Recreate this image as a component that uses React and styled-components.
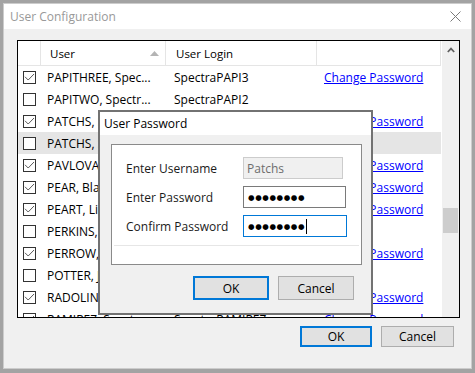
import React from 'react';
import styled, { createGlobalStyle } from 'styled-components';

const GlobalStyle = createGlobalStyle`
  html, body {
    margin: 0;
    padding: 0;
    background: #a3a3a3;
  }
  body {
    font-family: "Open Sans", "Noto Sans", sans-serif;
    font-size: 11.5px;
    color: #000;
  }
`;

const Screen = styled.div`
  position: relative;
  width: 475px;
  height: 373px;
  padding: 3px;
  box-sizing: border-box;
  background: #a3a3a3;
  overflow: hidden;
`;

const Window = styled.div`
  width: 469px;
  height: 366px;
  box-sizing: border-box;
  border: 1px solid #cccccc;
  background: #f0f0f0;
  display: flex;
  flex-direction: column;
`;

const TitleBar = styled.div`
  height: ${({ height }) => height}px;
  flex: none;
  background: #ffffff;
  display: flex;
  align-items: center;
  justify-content: space-between;
  padding: 0 10px 0 ${({ inset }) => inset}px;
`;

const TitleText = styled.span`
  font-size: 12px;
  color: ${({ active }) => (active ? '#000000' : '#999999')};
`;

const Body = styled.div`
  display: flex;
  flex-direction: column;
  padding: 11px 11px 0 13px;
`;

const ListBox = styled.div`
  height: 278px;
  box-sizing: border-box;
  border: 1px solid #000000;
  background: #ffffff;
  display: flex;
  overflow: hidden;
`;

const Table = styled.div`
  width: 423px;
  flex: none;
`;

const Grid = styled.div`
  display: grid;
  grid-template-columns: 23px 125px 151px 124px;
  height: ${({ height }) => height}px;
  align-items: center;
  background: ${({ highlight }) => (highlight ? '#e5e5e5' : 'transparent')};
`;

const Header = styled(Grid)`
  border-bottom: 1px solid #e5e5e5;
  align-items: stretch;
`;

const HeadCell = styled.div`
  display: flex;
  align-items: center;
  justify-content: space-between;
  padding: 0 6px 0 ${({ pad }) => pad}px;
  border-right: 1px solid #e5e5e5;
`;

const Cell = styled.div`
  padding-left: ${({ pad }) => pad}px;
  white-space: nowrap;
  overflow: hidden;
  font-size: 12px;
`;

const CheckCell = styled.div`
  display: flex;
  justify-content: center;
`;

const Box = styled.span`
  width: 13px;
  height: 13px;
  box-sizing: border-box;
  border: 1px solid #333333;
  background: #ffffff;
  display: flex;
`;

const Link = styled.a`
  color: #0000ff;
  text-decoration: underline;
  font-size: 12px;
`;

const Scrollbar = styled.div`
  width: 17px;
  flex: none;
  margin-left: 1px;
  background: #f0f0f0;
  display: flex;
  flex-direction: column;
`;

const ArrowButton = styled.div`
  height: 17px;
  display: flex;
  align-items: center;
  justify-content: center;
`;

const Thumb = styled.div`
  height: 25px;
  margin: ${({ offset }) => offset}px 1px 0;
  background: #cdcdcd;
`;

const ButtonRow = styled.div`
  display: flex;
  justify-content: flex-end;
  gap: 9px;
  margin-top: ${({ top }) => top}px;
  padding-right: ${({ right }) => right}px;
`;

const Button = styled.button`
  width: ${({ w }) => w}px;
  height: ${({ h }) => h}px;
  box-sizing: border-box;
  padding: 0;
  font-family: inherit;
  font-size: 12px;
  color: #000000;
  background: #e1e1e1;
  border: ${({ primary }) => (primary ? '2px solid #0078d7' : '1px solid #adadad')};
`;

const Dialog = styled.div`
  position: absolute;
  left: 98px;
  top: 110px;
  width: 275px;
  height: 205px;
  box-sizing: border-box;
  border: 2px solid #727272;
  background: #f0f0f0;
  display: flex;
  flex-direction: column;
`;

const Group = styled.div`
  width: 251px;
  height: 121px;
  margin: 9px 0 0 11px;
  box-sizing: border-box;
  border: 1px solid #8a8a8a;
  background: #ffffff;
  padding-top: 12px;
`;

const Fields = styled.div`
  display: grid;
  grid-template-columns: 117px auto;
  grid-auto-rows: 22px;
  row-gap: 7px;
  align-items: center;
  padding-left: 14px;
`;

const Label = styled.span`
  font-size: 12px;
  color: #1a1a1a;
`;

const Input = styled.div`
  width: ${({ w }) => w}px;
  height: 22px;
  box-sizing: border-box;
  display: flex;
  align-items: center;
  padding-left: 3px;
  border: 1px solid ${({ focus, disabled }) => (focus ? '#0078d7' : disabled ? '#cccccc' : '#7a7a7a')};
  background: ${({ disabled }) => (disabled ? '#f0f0f0' : '#ffffff')};
  color: ${({ disabled }) => (disabled ? '#6d6d6d' : '#000000')};
  font-size: 12px;
`;

const Dots = styled.span`
  font-family: "DejaVu Sans", sans-serif;
  font-size: 7.5px;
  letter-spacing: 0.6px;
  padding-left: 1px;
`;

const Caret = styled.span`
  width: 1px;
  height: 15px;
  margin-left: 1px;
  background: #000000;
`;

const Separator = styled.div`
  height: 1px;
  margin: 8px 2px 0;
  background: #e6e6e6;
`;

const Check = () => (
  <svg width="11" height="11" viewBox="0 0 11 11">
    <polyline points="1,4.8 4.2,8 10,2" fill="none" stroke="#5a5a5a" strokeWidth="1" />
  </svg>
);

const CloseIcon = () => (
  <svg width="11" height="11" viewBox="0 0 11 11">
    <path d="M0.5 0.5 L10.5 10.5 M10.5 0.5 L0.5 10.5" stroke="#7a7a7a" strokeWidth="1" />
  </svg>
);

const rows = [
  { id: 1, checked: true, user: 'PAPITHREE, Spec...', login: 'SpectraPAPI3', link: true },
  { id: 2, checked: false, user: 'PAPITWO, Spectr...', login: 'SpectraPAPI2' },
  { id: 3, checked: true, user: 'PATCHS, Spectra', login: 'SpectraPatchs', link: true },
  { id: 4, checked: false, user: 'PATCHS, Spectra', login: 'Patchs', highlight: true },
  { id: 5, checked: true, user: 'PAVLOVA, Anna', login: 'apavlova', link: true },
  { id: 6, checked: true, user: 'PEAR, Blake', login: 'bpear', link: true },
  { id: 7, checked: true, user: 'PEART, Lisa', login: 'lpeart', link: true },
  { id: 8, checked: false, user: 'PERKINS, Mark', login: 'mperkins' },
  { id: 9, checked: true, user: 'PERROW, Dana', login: 'dperrow', link: true },
  { id: 10, checked: false, user: 'POTTER, James', login: 'jpotter' },
  { id: 11, checked: true, user: 'RADOLINSKI, Ed', login: 'eradolinski', link: true },
  { id: 12, checked: true, user: 'RAMIREZ, Spectr...', login: 'SpectraRAMIREZ', link: true },
];

const App = () => (
  <>
    <GlobalStyle />
    <Screen>
      <Window>
        <TitleBar height={25} inset={6}>
          <TitleText>User Configuration</TitleText>
          <CloseIcon />
        </TitleBar>
        <Body>
          <ListBox>
            <Table>
              <Header height={24}>
                <HeadCell pad={0} />
                <HeadCell pad={9}>
                  <span>User</span>
                  <svg width="9" height="5" viewBox="0 0 9 5">
                    <polygon points="0,5 4.5,0 9,5" fill="#b4b4b4" />
                  </svg>
                </HeadCell>
                <HeadCell pad={10}>User Login</HeadCell>
                <HeadCell pad={0} />
              </Header>
              {rows.map((r) => (
                <Grid key={r.id} height={22} highlight={r.highlight}>
                  <CheckCell>
                    <Box>{r.checked && <Check />}</Box>
                  </CheckCell>
                  <Cell pad={6}>{r.user}</Cell>
                  <Cell pad={8}>{r.login}</Cell>
                  <Cell pad={7}>{r.link && <Link>Change Password</Link>}</Cell>
                </Grid>
              ))}
            </Table>
            <Scrollbar>
              <ArrowButton>
                <svg width="8" height="6" viewBox="0 0 8 6">
                  <polyline points="0.8,5 4,1.6 7.2,5" fill="none" stroke="#606060" strokeWidth="1.7" />
                </svg>
              </ArrowButton>
              <Thumb offset={150} />
            </Scrollbar>
          </ListBox>
          <ButtonRow top={8} right={6}>
            <Button primary w={72} h={21}>OK</Button>
            <Button w={73} h={21}>Cancel</Button>
          </ButtonRow>
        </Body>
      </Window>

      <Dialog>
        <TitleBar height={23} inset={4}>
          <TitleText active>User Password</TitleText>
        </TitleBar>
        <Group>
          <Fields>
            <Label>Enter Username</Label>
            <Input disabled w={100}>Patchs</Input>
            <Label>Enter Password</Label>
            <Input w={103}>
              <Dots>●●●●●●●●</Dots>
            </Input>
            <Label>Confirm Password</Label>
            <Input focus w={104}>
              <Dots>●●●●●●●●</Dots>
              <Caret />
            </Input>
          </Fields>
          <Separator />
        </Group>
        <ButtonRow top={11} right={17}>
          <Button primary w={76} h={24}>OK</Button>
          <Button w={76} h={24}>Cancel</Button>
        </ButtonRow>
      </Dialog>
    </Screen>
  </>
);

export default App;
